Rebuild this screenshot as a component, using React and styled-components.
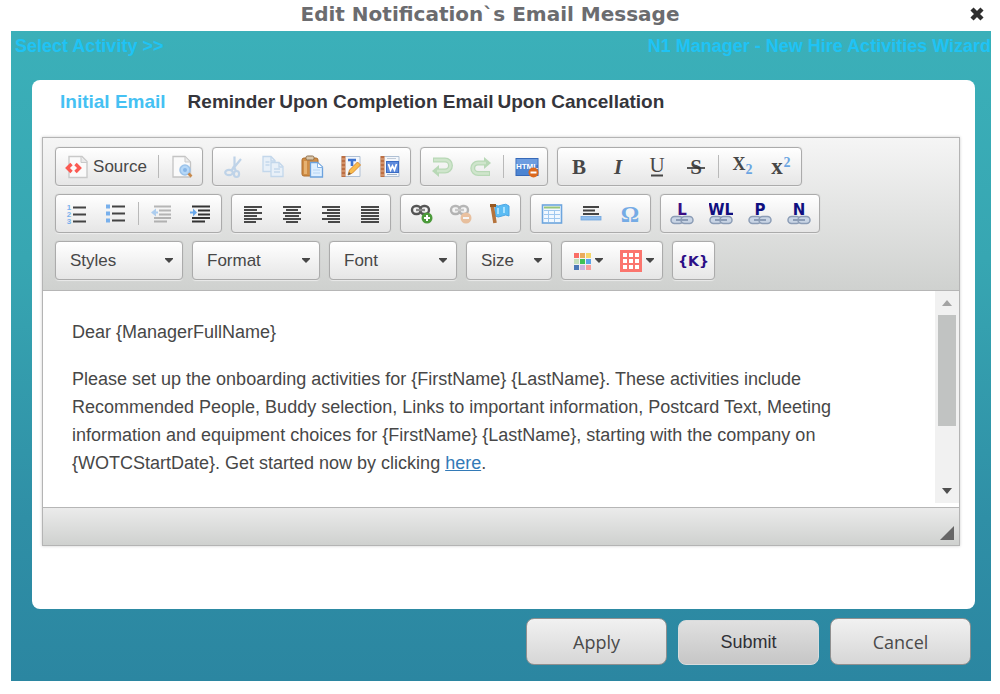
import {useId} from 'react';
import styled, {createGlobalStyle, css} from 'styled-components';

//* small drawings used on the toolbar buttons
const Svg = ({children, w = 24}) => (
  <svg width={w} height="24" viewBox={`0 0 ${w} 24`} aria-hidden="true">
    {children}
  </svg>
);

const SourceIcon = () => (
  <Svg>
    <path d="M4 1.5h13l5 5v16H4z" fill="#fafafa" stroke="#c9c9c9" strokeWidth="1.4" />
    <path d="M16 2v5.5h6" fill="#e9e9e9" stroke="#c9c9c9" />
    <path d="M6.500 9l-4 4 4 4M10.500 9l4 4-4 4" fill="none" stroke="#fb5a52" strokeWidth="3.4" />
  </Svg>
);

const PreviewIcon = () => (
  <Svg>
    <path d="M3 1.5h12l5.500 5.500v15H3z" fill="#fafafa" stroke="#c4c4c4" strokeWidth="1.3" />
    <path d="M15 2v5h5" fill="#ececec" stroke="#c9c9c9" />
    <circle cx="15" cy="15" r="5" fill="#b5d7f7" stroke="#9cc3ea" strokeWidth="1.6" />
    <circle cx="15" cy="15" r="2" fill="#86b6e8" />
    <path d="M18.5 18.5l3 3" stroke="#c98a4b" strokeWidth="2.6" />
  </Svg>
);

const CutIcon = () => (
  <Svg>
    <g fill="none" stroke="#bfd3e8" strokeWidth="2.2">
      <path d="M12.5 1.5v9l-3 5M19 4l-9 11" />
      <ellipse cx="7" cy="17.5" rx="3.8" ry="2.6" />
      <ellipse cx="14.5" cy="19" rx="2.6" ry="3" />
      <path d="M12 12l2 4" />
    </g>
  </Svg>
);

const CopyIcon = () => (
  <Svg>
    <g fill="#e8f0f8" stroke="#c3d7eb" strokeWidth="1.3">
      <path d="M2 1.5h8l4 4v11H2z" />
      <path d="M10 7.5h8l4 4v10H10z" />
      <path d="M10 2v4h4M18 8v4h4M4.5 7h4M4.5 10h4M13 14h6M13 17h6" fill="none" />
    </g>
  </Svg>
);

const PasteIcon = () => (
  <Svg>
    <rect x="2" y="3" width="16" height="18" rx="2" fill="#d08d45" stroke="#ad6d2c" />
    <path d="M4 6h3v13H4z" fill="#e6b272" />
    <rect x="6" y="1" width="8" height="4" rx="1.5" fill="#d9c5a8" stroke="#8e6f4c" />
    <path d="M10.5 7.5h7l5 4.5v10h-12z" fill="#deefff" stroke="#6ca2dd" strokeWidth="1.3" />
    <path d="M17.5 8v4.5h5" fill="#fff" stroke="#83b1e3" />
    <path d="M13 15h7M13 18h7" stroke="#b5d4f4" />
  </Svg>
);

const Notebook = () => (
  <>
    <path d="M3 1.5h18v20H3z" fill="#f4f7fb" stroke="#afc0d4" />
    <path d="M2.5 1h4v21h-4z" fill="#bd6f43" />
    <path d="M2 4h4M2 8h4M2 12h4M2 16h4M2 20h4" stroke="#e6b38f" />
  </>
);

const PasteTextIcon = () => (
  <Svg>
    <Notebook />
    <path d="M9 5h8M13 5v6" stroke="#3e74d0" strokeWidth="2.6" />
    <path d="M9 20l1.500-5 8-8 3 3-8 8z" fill="#f8bd4f" stroke="#db8b31" />
    <path d="M9 20l1-3 2 2z" fill="#555" />
  </Svg>
);

const PasteWordIcon = () => (
  <Svg>
    <Notebook />
    <path d="M9 3.5h9" stroke="#c1cbd8" />
    <rect x="8.500" y="6.500" width="12" height="11" fill="#5e8bdc" stroke="#396bc4" />
    <path d="M10.5 9l2 6 2-4 2 4 2-6" fill="none" stroke="#fff" strokeWidth="1.7" />
    <path d="M9 19.5h10" stroke="#a7b5c6" />
  </Svg>
);

const UndoIcon = () => (
  <Svg>
    <path d="M3 5h12a4.700 4.700 0 010 11H8" fill="none" stroke="#b8d8b6" strokeWidth="5" />
    <path d="M9 10v12l-7-6z" fill="#b8d8b6" />
    <path d="M4 5h11a4.700 4.700 0 010 11H7" fill="none" stroke="#cfe5cc" strokeWidth="2.4" />
  </Svg>
);

const RedoIcon = () => (
  <Svg>
    <path d="M21 18.500H9a4.900 4.900 0 010-10.500H16" fill="none" stroke="#b8d8b6" strokeWidth="5" />
    <path d="M15 2v12l7-6z" fill="#b8d8b6" />
    <path d="M20 18.500H9a4.900 4.900 0 010-10.500H17" fill="none" stroke="#cfe5cc" strokeWidth="2.4" />
  </Svg>
);

const IframeIcon = () => (
  <Svg>
    <rect x="1" y="3.500" width="22" height="17" fill="#4c84d2" stroke="#3669b8" />
    <path d="M1.500 4h21v6h-21z" fill="#6d9de0" />
    <text x="12" y="14" textAnchor="middle" fontFamily="Liberation Sans, sans-serif" fontSize="8" fontWeight="700" fill="#fff">
      HTML
    </text>
    <circle cx="18.5" cy="17.5" r="5" fill="#dc691e" />
    <path d="M15.5 17.5h6" stroke="#fff" strokeWidth="2" />
  </Svg>
);

const Serif = ({x = 12, y = 19, size = 21, children, ...rest}) => (
  <text x={x} y={y} fontSize={size} textAnchor="middle" fontFamily="Liberation Serif, serif" fill="#474747" {...rest}>
    {children}
  </text>
);

const BoldIcon = () => (
  <Svg>
    <Serif fontWeight="700">B</Serif>
  </Svg>
);

const ItalicIcon = () => (
  <Svg>
    <Serif fontStyle="italic" fontWeight="700">I</Serif>
  </Svg>
);

const UnderlineIcon = () => (
  <Svg>
    <Serif y={17}>U</Serif>
    <path d="M6 20.5h12" stroke="#474747" strokeWidth="2" />
  </Svg>
);

const StrikeIcon = () => (
  <Svg>
    <Serif fontWeight="700">S</Serif>
    <path d="M3 13h18" stroke="#333" strokeWidth="1.6" />
  </Svg>
);

const SubscriptIcon = () => (
  <Svg>
    <Serif x={9} y={15} size={18} fontWeight="700">X</Serif>
    <Serif x={19} y={19} size={14} fontWeight="700" fill="#6ba5e2">2</Serif>
  </Svg>
);

const SuperscriptIcon = () => (
  <Svg>
    <Serif x={8} y={19} size={23} fontWeight="700">x</Serif>
    <Serif x={18} y={12} size={14} fontWeight="700" fill="#6ba5e2">2</Serif>
  </Svg>
);

const NumberedIcon = () => (
  <Svg>
    <g fontFamily="Liberation Sans, sans-serif" fontSize="8" fontWeight="700" fill="#78b0ec" textAnchor="middle">
      <text x="4" y="8">1</text>
      <text x="4" y="15">2</text>
      <text x="4" y="22">3</text>
    </g>
    <path d="M8 5.500h13M8 12.500h13M8 19.500h13" stroke="#444" strokeWidth="2" />
  </Svg>
);

const BulletedIcon = () => (
  <Svg>
    <path d="M2 4.500h4M2 11.500h4M2 18.500h4" stroke="#78b0ec" strokeWidth="4" />
    <path d="M8 4.500h13M8 11.500h13M8 18.500h13" stroke="#444" strokeWidth="2" />
  </Svg>
);

const OutdentIcon = () => (
  <Svg>
    <g opacity="0.5">
      <path d="M4 4.500h17M9 8.500h12M9 12.500h12M4 16h17M4 19.500h13" stroke="#777" strokeWidth="2" />
      <path d="M1 10.500l5-4v3h2v2H6v3z" fill="#6aa9ec" />
    </g>
  </Svg>
);

const IndentIcon = () => (
  <Svg>
    <path d="M3 4.500h18M9 8.500h12M9 12.500h12M3 16h18M3 19.500h13" stroke="#333" strokeWidth="2" />
    <path d="M8 10.500l-4-4v3H1v2h3v3z" fill="#6aa9ec" />
  </Svg>
);

//* rows: [start, length] of every stroke, top to bottom
const AlignIcon = ({rows}) => (
  <Svg>
    {rows.map(([x, width], i) => (
      <path key={i} d={`M${x} ${5 + i * 3}h${width}`} stroke="#484848" strokeWidth="2" />
    ))}
  </Svg>
);

const alignments = [
  ['Align left', [[3, 18], [3, 13], [3, 18], [3, 13], [3, 18], [3, 12]]],
  ['Center', [[3, 18], [6, 12], [3, 18], [5, 14], [3, 18], [6, 12]]],
  ['Align right', [[3, 18], [8, 13], [3, 18], [8, 13], [3, 18], [9, 12]]],
  ['Justify', [[3, 18], [3, 18], [3, 18], [3, 18], [3, 18], [3, 18]]]
];

const Links = ({badge, sign, faded}) => (
  <Svg>
    <g opacity={faded ? 0.4 : 1}>
      <g fill="none" stroke="#555" strokeWidth="2.4">
        <rect x="2" y="4" width="9" height="8" rx="4" />
        <rect x="10" y="4" width="9" height="8" rx="4" />
        <path d="M6 8h9" stroke="#888" />
      </g>
      <circle cx="17" cy="16" r="5.5" fill={badge} />
      <path d={sign} stroke="#fff" strokeWidth="2" />
    </g>
  </Svg>
);

const FlagIcon = () => (
  <Svg>
    <path d="M7 3q3 2 7 0t7 1v10q-3-2-7 0t-7 0z" fill="#5bbcf4" stroke="#4aa5e4" />
    <path d="M10 6v6M16 5v6" stroke="#a7e1ff" strokeWidth="2" />
    <path d="M4 3l3 18" stroke="#b5733c" strokeWidth="3.6" />
    <path d="M2 3.500h6" stroke="#965820" strokeWidth="3" />
  </Svg>
);

const TableIcon = () => (
  <Svg>
    <rect x="2.500" y="3" width="19" height="18" fill="#f1f8ff" stroke="#6da5de" strokeWidth="1.6" />
    <path d="M4 5.500h16" stroke="#96c57a" strokeWidth="2" />
    <path d="M8.500 8v12M14.500 8v12M4 8.500h16M4 12.500h16M4 16.500h16" stroke="#a0c8ef" />
  </Svg>
);

const RuleIcon = () => (
  <Svg>
    <path d="M4 5h16M4 8.500h12M4 12h16" stroke="#444" strokeWidth="2" />
    <rect x="2" y="14.500" width="20" height="3.500" fill="#8fbded" stroke="#6fa5de" strokeWidth="0.8" />
  </Svg>
);

const OmegaIcon = () => (
  <Svg>
    <Serif y={20} size={23} fontWeight="700" fill="#75abe5">Ω</Serif>
  </Svg>
);

const LetterLink = ({letters, color = '#0f0f80'}) => (
  <Svg>
    <g fill="#c9d5e5" stroke="#8c9db6" strokeWidth="1.5">
      <rect x="1" y="14.500" width="12" height="7" rx="3.500" />
      <rect x="11" y="14.500" width="12" height="7" rx="3.500" />
      <path d="M6 18h12" strokeWidth="2" />
    </g>
    <text x="12" y="13" textAnchor="middle" fontFamily="DejaVu Sans, sans-serif" fontSize="15" fontWeight="700" fill={color}>
      {letters}
    </text>
  </Svg>
);

const swatches = ['#fa6e66', '#eaab5c', '#f5d76b', '#c3dfba', '#40c156', '#5aa3e8', '#4a78b6', '#cdb5e0', '#fa9c9c'];

const TextColorIcon = () => (
  <Svg w={18}>
    {swatches.map((fill, i) => (
      <rect key={fill} x={1 + (i % 3) * 6} y={4 + Math.floor(i / 3) * 6} width="5" height="5" fill={fill} />
    ))}
  </Svg>
);

const BgColorIcon = () => (
  <Svg w={22}>
    <rect x="0" y="1" width="22" height="22" fill="#fb756e" />
    {[0, 1, 2, 3, 4, 5, 6, 7, 8].map(i => (
      <rect key={i} x={3 + (i % 3) * 6} y={4 + Math.floor(i / 3) * 6} width="4" height="4" fill="#fff" />
    ))}
  </Svg>
);

const Arrow = () => (
  <svg width="8" height="5" viewBox="0 0 8 5" aria-hidden="true">
    <path d="M0 0h8v1L4 5 0 1z" fill="#474747" />
  </svg>
);

//* label + icon make one square button
const Tool = ({label, children}) => (
  <ToolButton type="button" aria-label={label} title={label}>
    {children}
  </ToolButton>
);

const Combo = ({label, narrow}) => {
  const id = useId();
  return (
    <ComboBox $narrow={narrow}>
      <select id={id} aria-label={label}>
        <option>{label}</option>
      </select>
      <Arrow />
    </ComboBox>
  );
};

function App() {
  return (
    <>
      <GlobalStyle />
      <Dialog>
        <Header>
          <h1>Edit Notification`s Email Message</h1>
          <CloseButton type="button" aria-label="Close">
            <svg width="16" height="16" viewBox="0 0 16 16">
              <path d="M3 3l10 10M13 3L3 13" stroke="#2e2e2e" strokeWidth="4.4" />
            </svg>
          </CloseButton>
        </Header>
        <Wizard>
          <WizardBar>
            <a href="#activity">Select Activity &gt;&gt;</a>
            <h2>N1 Manager - New Hire Activities Wizard</h2>
          </WizardBar>
          <Card>
            <Tabs>
              <Tab href="#initial" $active>Initial Email</Tab>
              <Tab href="#reminder">Reminder</Tab>
              <Tab href="#completion">Upon Completion Email</Tab>
              <Tab href="#cancellation">Upon Cancellation</Tab>
            </Tabs>
            <Editor>
              <Toolbar>
                <ToolRow>
                  <Group>
                    <SourceButton type="button">
                      <SourceIcon />
                      Source
                    </SourceButton>
                    <Separator />
                    <Tool label="Preview"><PreviewIcon /></Tool>
                  </Group>
                  <Group>
                    <Tool label="Cut"><CutIcon /></Tool>
                    <Tool label="Copy"><CopyIcon /></Tool>
                    <Tool label="Paste"><PasteIcon /></Tool>
                    <Tool label="Paste as plain text"><PasteTextIcon /></Tool>
                    <Tool label="Paste from Word"><PasteWordIcon /></Tool>
                  </Group>
                  <Group>
                    <Tool label="Undo"><UndoIcon /></Tool>
                    <Tool label="Redo"><RedoIcon /></Tool>
                    <Separator />
                    <Tool label="Remove HTML"><IframeIcon /></Tool>
                  </Group>
                  <Group>
                    <Tool label="Bold"><BoldIcon /></Tool>
                    <Tool label="Italic"><ItalicIcon /></Tool>
                    <Tool label="Underline"><UnderlineIcon /></Tool>
                    <Tool label="Strike through"><StrikeIcon /></Tool>
                    <Separator />
                    <Tool label="Subscript"><SubscriptIcon /></Tool>
                    <Tool label="Superscript"><SuperscriptIcon /></Tool>
                  </Group>
                </ToolRow>
                <ToolRow>
                  <Group>
                    <Tool label="Numbered list"><NumberedIcon /></Tool>
                    <Tool label="Bulleted list"><BulletedIcon /></Tool>
                    <Separator />
                    <Tool label="Decrease indent"><OutdentIcon /></Tool>
                    <Tool label="Increase indent"><IndentIcon /></Tool>
                  </Group>
                  <Group>
                    {alignments.map(([label, rows]) => (
                      <Tool label={label} key={label}><AlignIcon rows={rows} /></Tool>
                    ))}
                  </Group>
                  <Group>
                    <Tool label="Link"><Links badge="#4b9a3a" sign="M14 16h6M17 13v6" /></Tool>
                    <Tool label="Unlink"><Links badge="#e07b28" sign="M14 16h6" faded /></Tool>
                    <Tool label="Anchor"><FlagIcon /></Tool>
                  </Group>
                  <Group>
                    <Tool label="Table"><TableIcon /></Tool>
                    <Tool label="Horizontal line"><RuleIcon /></Tool>
                    <Tool label="Special character"><OmegaIcon /></Tool>
                  </Group>
                  <Group>
                    <Tool label="Link token"><LetterLink letters="L" color="#3b0d84" /></Tool>
                    <Tool label="Wizard link token"><LetterLink letters="WL" /></Tool>
                    <Tool label="Portal token"><LetterLink letters="P" /></Tool>
                    <Tool label="Name token"><LetterLink letters="N" /></Tool>
                  </Group>
                </ToolRow>
                <ToolRow>
                  <Combo label="Styles" />
                  <Combo label="Format" />
                  <Combo label="Font" />
                  <Combo label="Size" narrow />
                  <Group>
                    <ColorButton type="button" aria-label="Text color">
                      <TextColorIcon />
                      <Arrow />
                    </ColorButton>
                    <ColorButton type="button" aria-label="Background color">
                      <BgColorIcon />
                      <Arrow />
                    </ColorButton>
                  </Group>
                  <Group>
                    <TokenButton type="button">{'{K}'}</TokenButton>
                  </Group>
                </ToolRow>
              </Toolbar>
              <Content>
                <Message>
                  <p>{'Dear {ManagerFullName}'}</p>
                  <p>
                    {'Please set up the onboarding activities for {FirstName} {LastName}. These activities include '}
                    {'Recommended People, Buddy selection, Links to important information, Postcard Text, Meeting '}
                    {'information and equipment choices for {FirstName} {LastName}, starting with the company on '}
                    {'{WOTCStartDate}. Get started now by clicking '}
                    <a href="#here">here</a>.
                  </p>
                </Message>
                <Scrollbar>
                  <svg width="10" height="6" viewBox="0 0 10 6">
                    <path d="M0 6h10L5 0z" fill="#a3a3a3" />
                  </svg>
                  <Thumb />
                  <svg width="10" height="6" viewBox="0 0 10 6">
                    <path d="M0 0h10L5 6z" fill="#505050" />
                  </svg>
                </Scrollbar>
              </Content>
              <EditorFooter>
                <svg width="14" height="14" viewBox="0 0 14 14">
                  <path d="M14 0v14H0z" fill="#666" />
                </svg>
              </EditorFooter>
            </Editor>
          </Card>
          <Actions>
            <ActionButton type="button">Apply</ActionButton>
            <ActionButton type="submit" $primary>Submit</ActionButton>
            <ActionButton type="button">Cancel</ActionButton>
          </Actions>
        </Wizard>
      </Dialog>
    </>
  );
}

const GlobalStyle = createGlobalStyle`
  * {
    box-sizing: border-box;
    margin: 0;
    padding: 0;
  }
  body {
    background: #fff;
    color: #474747;
    font-family: 'Liberation Sans', Arial, sans-serif;
    font-size: 18px;
  }
  button, select {
    font: inherit;
    color: inherit;
    border: none;
    background: none;
    cursor: pointer;
  }
  a {
    text-decoration: none;
  }
  svg {
    display: block;
    flex: none;
  }
`;

const Dialog = styled.main`
  padding: 0 9px 12px 11px;
`;

const Header = styled.header`
  display: flex;
  align-items: center;
  height: 31px;
  padding-right: 6px;
  h1 {
    flex: 1;
    padding-bottom: 4px;
    text-align: center;
    font: 700 20px/24px 'DejaVu Sans', Verdana, sans-serif;
    color: #6b6c6f;
  }
`;

const CloseButton = styled.button`
  padding-bottom: 4px;
`;

const Wizard = styled.section`
  background: linear-gradient(#3bb0b9, #37a6b2 35%, #2f8fa6 75%, #2b86a1);
`;

const WizardBar = styled.div`
  display: flex;
  justify-content: space-between;
  height: 49px;
  padding: 5px 0 0 4px;
  line-height: 20px;
  font-weight: 700;
  color: #1fc3f5;
  a {
    color: inherit;
  }
  h2 {
    font-size: inherit;
  }
`;

const Card = styled.div`
  margin: 0 16px 0 21px;
  padding: 0 15px 63px 10px;
  border-radius: 8px;
  background: #fff;
`;

const Tabs = styled.nav`
  display: flex;
  gap: 4px;
  padding: 12px 18px 25px;
`;

const Tab = styled.a`
  font-size: 19px;
  line-height: 20px;
  font-weight: 700;
  color: #35353b;
  ${props =>
    props.$active &&
    css`
      margin-right: 18px;
      color: #45c1f3;
    `}
`;

const Editor = styled.div`
  border: 1px solid #b4b4b4;
  box-shadow: 0 0 3px rgba(0, 0, 0, 0.2);
`;

const Toolbar = styled.div`
  display: flex;
  flex-direction: column;
  gap: 8px;
  padding: 9px 12px 10px;
  border-bottom: 1px solid #b6b6b6;
  background: linear-gradient(#f5f5f5, #cfd1cf);
`;

const ToolRow = styled.div`
  display: flex;
  gap: 9px;
`;

const box = css`
  height: 39px;
  border: 1px solid #ababab;
  border-radius: 4px;
  background: linear-gradient(#fff, #e6e6e6);
  box-shadow: 0 1px 1px rgba(255, 255, 255, 0.6), 0 0 1px rgba(0, 0, 0, 0.25);
`;

const Group = styled.div`
  ${box}
  display: flex;
  padding: 0 1px;
`;

const ToolButton = styled.button`
  display: flex;
  align-items: center;
  justify-content: center;
  width: 39px;
`;

const SourceButton = styled(ToolButton)`
  gap: 4px;
  width: 98px;
  font-size: 17px;
`;

const ColorButton = styled(ToolButton)`
  gap: 4px;
  width: 49px;
`;

const TokenButton = styled(ToolButton)`
  font: 700 14px 'DejaVu Sans', sans-serif;
  color: #2b0f87;
`;

const Separator = styled.span`
  width: 1px;
  margin: 7px 3px;
  background: #b9b9b9;
`;

const ComboBox = styled.span`
  ${box}
  display: grid;
  align-items: center;
  width: ${props => (props.$narrow ? 86 : 128)}px;
  select {
    grid-area: 1 / 1;
    height: 37px;
    padding: 0 14px;
    appearance: none;
    font-size: 17px;
    outline: none;
  }
  svg {
    grid-area: 1 / 1;
    justify-self: end;
    margin-right: 9px;
    pointer-events: none;
  }
`;

const Content = styled.div`
  display: flex;
  background: #fff;
`;

const Message = styled.div`
  flex: 1;
  padding: 27px 29px 30px;
  line-height: 28px;
  p + p {
    margin-top: 19px;
  }
  a {
    color: #337ab7;
    text-decoration: underline;
  }
`;

const Scrollbar = styled.div`
  display: flex;
  flex-direction: column;
  align-items: center;
  width: 24px;
  margin-bottom: 4px;
  padding: 9px 0;
  background: #f1f1f1;
`;

const Thumb = styled.div`
  width: 18px;
  height: 111px;
  margin: 9px 0 auto;
  background: #c1c3c2;
`;

const EditorFooter = styled.footer`
  display: flex;
  justify-content: flex-end;
  align-items: flex-end;
  height: 38px;
  padding: 5px;
  border-top: 1px solid #b6b6b6;
  background: linear-gradient(#ebebeb, #cfd1cf);
`;

const Actions = styled.div`
  display: flex;
  justify-content: flex-end;
  align-items: flex-end;
  gap: 11px;
  padding: 9px 20px 16px;
`;

const ActionButton = styled.button`
  width: 141px;
  height: 47px;
  border: 1px solid #8f8f8f;
  border-radius: 8px;
  background: linear-gradient(#f1f1f1, #d6d6d6);
  font-family: 'Open Sans', sans-serif;
  color: #4a4a4a;
  ${props =>
    props.$primary &&
    css`
      height: 45px;
      border-color: #d9dcdd;
      background: linear-gradient(#e0e0e0, #c6c6c6);
      font-family: 'Liberation Sans', Arial, sans-serif;
      color: #2f2f35;
    `}
`;

export default App;
